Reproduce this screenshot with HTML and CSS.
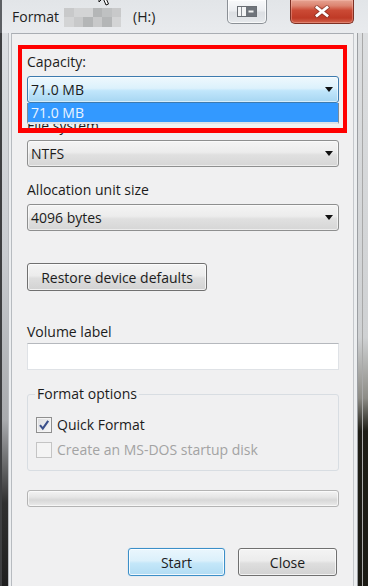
FILE: index.html
```html
<!DOCTYPE html>
<html>
<head>
<meta charset="utf-8">
<title>Format</title>
<link rel="stylesheet" href="styles.css">
</head>
<body>
<div class="window">
  <div class="titlebar">
    <div class="title">
      <span class="title-text">Format</span>
      <span class="blur">
        <i class="s2"></i><i class="s1"></i><i class="s1"></i><i class="s3"></i><i class="s4"></i><i class="s2"></i>
        <i class="s1"></i><i class="s2"></i><i class="s3"></i><i class="s2"></i><i class="s3"></i><i class="s1"></i>
      </span>
      <span class="title-text paren">(H:)</span>
    </div>
    <div class="caption-buttons">
      <div class="cap-btn snap">
        <svg width="20" height="11" viewBox="0 0 20 11">
          <rect x="0.5" y="0.5" width="19" height="10" fill="#f4f5f6" stroke="#6a6e74"/>
          <line x1="4.5" y1="1" x2="4.5" y2="10" stroke="#8a8e94"/>
          <rect x="9" y="1" width="10" height="9" fill="#6f747b"/>
          <rect x="11.5" y="4.5" width="5" height="2" fill="#f2f2f2"/>
        </svg>
      </div>
      <div class="cap-btn close">
        <svg width="16" height="13" viewBox="0 0 16 13">
          <path d="M3 2.5 L13 10.5 M13 2.5 L3 10.5" stroke="#6e2a20" stroke-width="4.6" stroke-linecap="square" opacity="0.55"/>
          <path d="M3 2.5 L13 10.5 M13 2.5 L3 10.5" stroke="#ffffff" stroke-width="2.8" stroke-linecap="square"/>
        </svg>
      </div>
    </div>
    <svg class="cursor" width="14" height="22" viewBox="0 0 14 22">
      <polygon points="1,1 1,17 5,13 8,20 10.5,19 7.5,12 12.5,12" fill="#ffffff" stroke="#111111" stroke-width="1"/>
    </svg>
  </div>

  <div class="body">
    <div class="frame-left"></div>
    <div class="client">
      <div class="field">
        <div class="label">Capacity:</div>
        <div class="combo-wrap">
          <div class="combo combo-open"><span>71.0 MB</span><i class="arrow"></i></div>
          <div class="combo-list">71.0 MB</div>
        </div>
      </div>

      <div class="field">
        <div class="label">File system</div>
        <div class="combo"><span>NTFS</span><i class="arrow"></i></div>
      </div>

      <div class="field">
        <div class="label">Allocation unit size</div>
        <div class="combo"><span>4096 bytes</span><i class="arrow"></i></div>
      </div>

      <button class="btn btn-restore">Restore device defaults</button>

      <div class="label label-volume">Volume label</div>
      <div class="textbox"></div>

      <fieldset class="group">
        <legend>Format options</legend>
        <div class="check-row">
          <span class="checkbox checked">
            <svg width="14" height="14" viewBox="0 0 14 14">
              <path d="M3 7.2 L5.8 10.6 L11.2 2.8" fill="none" stroke="#3a4f8a" stroke-width="2.1"/>
            </svg>
          </span>
          <span>Quick Format</span>
        </div>
        <div class="check-row disabled">
          <span class="checkbox"></span>
          <span>Create an MS-DOS startup disk</span>
        </div>
      </fieldset>

      <div class="progress"></div>

      <div class="actions">
        <button class="btn btn-default">Start</button>
        <button class="btn btn-close">Close</button>
      </div>

      <div class="highlight"></div>
    </div>
    <div class="frame-right"></div>
  </div>
</div>
</body>
</html>
```
FILE: styles.css
```css
* { box-sizing: border-box; }

html, body {
  margin: 0;
  padding: 0;
}

body {
  width: 368px;
  height: 586px;
  overflow: hidden;
  background: #e3e6e9;
  font-family: "Open Sans", "Noto Sans", sans-serif;
  font-size: 14px;
  line-height: 18px;
  color: #1c1c1c;
}

.window {
  display: flex;
  flex-direction: column;
  height: 586px;
}

/* ---------- title bar ---------- */
.titlebar {
  position: relative;
  height: 33px;
  flex: none;
  display: flex;
  justify-content: space-between;
  align-items: flex-start;
  background: linear-gradient(#e2e5e8, #e9ebee);
  border-left: 2px solid #5d6064;
}

.title {
  display: flex;
  align-items: center;
  height: 34px;
  padding-left: 10px;
}

.title-text {
  color: #1e1e1e;
  font-size: 14px;
}

.paren { margin-left: 12px; }

.blur {
  display: grid;
  grid-template-columns: repeat(6, 1fr);
  grid-template-rows: 1fr 1fr;
  width: 57px;
  height: 19px;
  margin-left: 5px;
}

.blur i { display: block; }
.blur .s1 { background: #d3d4d5; }
.blur .s2 { background: #c8c9ca; }
.blur .s3 { background: #b4b6b7; }
.blur .s4 { background: #bfc1c2; }

.caption-buttons {
  display: flex;
  gap: 23px;
  margin-right: 14px;
}

.cap-btn {
  height: 24px;
  display: flex;
  align-items: center;
  justify-content: center;
  border-radius: 0 0 5px 5px;
}

.snap {
  width: 40px;
  border: 1px solid #8b9096;
  border-top: none;
  background: linear-gradient(#f8f9fa, #eceef1 45%, #dcdfe3 55%, #e6e9ec);
  box-shadow: inset 0 0 0 1px rgba(255, 255, 255, 0.7);
}

.close {
  width: 64px;
  border: 1px solid #7d3024;
  border-top: none;
  background: linear-gradient(#e6a392 0%, #dc8470 25%, #cb4a35 45%, #bf3a26 78%, #d2634c 100%);
  box-shadow: inset 0 0 0 1px rgba(255, 200, 190, 0.35);
}

.cursor {
  position: absolute;
  left: 96px;
  top: -15px;
}

/* ---------- body / frame ---------- */
.body {
  flex: 1;
  display: flex;
  min-height: 0;
}

.frame-left {
  width: 11px;
  flex: none;
  background:
    linear-gradient(90deg, #3e3f41 0, #3e3f41 2px, transparent 2px, transparent 8px, #b9bcc0 8px, #b9bcc0 9px, #eceef0 9px),
    linear-gradient(#dcdfe2 0%, #c9ccd0 40%, #a9abae 70%, #303030 85%, #1f1f1f 100%);
}

.frame-right {
  width: 14px;
  flex: none;
  background:
    linear-gradient(90deg, #eceef0 0, #eceef0 3px, #9b9ea2 3px, #9b9ea2 4px, transparent 4px, transparent 8px, #a9a9a9 8px, #a9a9a9 9px, transparent 9px),
    linear-gradient(#dcdee0 0%, #cfd1d3 55%, #8d8c86 66%, #1e1d16 72%, #1b1a14 100%);
}

.client {
  position: relative;
  flex: 1;
  background: #f0f0f1;
  border-top: 1px solid #a9adb3;
  border-left: 1px solid #b7bbc0;
  border-right: 1px solid #c5c8cc;
  padding: 19px 14px 0 15px;
}

/* ---------- fields ---------- */
.field { margin-bottom: 14px; }

.label {
  height: 18px;
  margin-bottom: 5px;
  white-space: nowrap;
}

.combo-wrap { position: relative; }

.combo {
  height: 27px;
  border: 1px solid #8e8f8f;
  border-radius: 3px;
  background: linear-gradient(#f4f4f4 0%, #ececec 45%, #e0e0e0 55%, #d6d6d6 100%);
  box-shadow: inset 0 0 0 1px rgba(255, 255, 255, 0.55);
  display: flex;
  align-items: center;
  justify-content: space-between;
  padding: 0 5px 0 3px;
}

.combo-open {
  border-color: #3d7baf;
  background: linear-gradient(#eef8fd 0%, #dcf1fc 45%, #c1e6fb 55%, #a6d6f2 100%);
}

.arrow {
  width: 0;
  height: 0;
  border-left: 4px solid transparent;
  border-right: 4px solid transparent;
  border-top: 5px solid #111;
}

.combo-list {
  position: absolute;
  left: 0;
  right: 0;
  top: 27px;
  height: 21px;
  background: #3399ff;
  color: #eaf4ff;
  border: 1px solid #7a8a9a;
  border-top: none;
  border-bottom: 2px solid #dfe3e8;
  padding-left: 3px;
  line-height: 19px;
}

/* ---------- buttons ---------- */
.btn {
  display: block;
  height: 28px;
  border: 1px solid #707070;
  border-radius: 3px;
  background: linear-gradient(#f4f4f4 0%, #ececec 45%, #dedede 55%, #d2d2d2 100%);
  box-shadow: inset 0 0 0 1px rgba(255, 255, 255, 0.7);
  font-family: inherit;
  font-size: 14px;
  color: #1c1c1c;
  padding: 0;
}

.btn-restore {
  width: 180px;
  margin-top: 32px;
}

.label-volume {
  margin-top: 32px;
  margin-bottom: 2px;
}

.textbox {
  height: 27px;
  background: #ffffff;
  border: 1px solid #dfe2e6;
  border-top-color: #b5b8bd;
}

/* ---------- group ---------- */
.group {
  margin: 15px 0 0;
  padding: 14px 7px 12px;
  border: 1px solid #d8dde2;
  border-radius: 3px;
  min-width: 0;
}

.group legend {
  padding: 0 2px;
  height: 18px;
}

.check-row {
  display: flex;
  align-items: center;
  gap: 5px;
  height: 16px;
  margin-left: 1px;
  white-space: nowrap;
}

.check-row + .check-row { margin-top: 9px; }

.checkbox {
  width: 16px;
  height: 16px;
  flex: none;
  border: 1px solid #8f8f8f;
  background: linear-gradient(135deg, #dcdde0, #f7f7f7);
  box-shadow: inset 0 0 0 1px #f4f4f4;
  display: flex;
  align-items: center;
  justify-content: center;
}

.disabled { color: #a3a3a3; }

.disabled .checkbox {
  border-color: #c4c4c4;
  background: #f4f4f4;
  box-shadow: none;
}

/* ---------- progress ---------- */
.progress {
  height: 17px;
  margin-top: 19px;
  border: 1px solid #b4b4b4;
  border-radius: 3px;
  background: linear-gradient(#f4f4f4 0%, #e6e6e6 40%, #d8d8d8 60%, #ebebeb 100%);
  box-shadow: inset 0 0 0 1px rgba(255, 255, 255, 0.6);
}

/* ---------- actions ---------- */
.actions {
  display: flex;
  justify-content: flex-end;
  gap: 13px;
  margin-top: 41px;
  padding-right: 2px;
}

.btn-default {
  width: 97px;
  border-color: #3c8fc8;
  background: linear-gradient(#eaf6fd 0%, #dbf0fb 45%, #c4e7f9 55%, #b2dcf3 100%);
  box-shadow: inset 0 0 0 1px rgba(255, 255, 255, 0.8), 0 0 1px #7cc3ee;
}

.btn-close { width: 99px; }

/* ---------- annotation overlay ---------- */
.highlight {
  position: absolute;
  left: 6px;
  top: 11px;
  width: 329px;
  height: 88px;
  border: 4px solid #ff0000;
  border-bottom-width: 5px;
  pointer-events: none;
}
```
